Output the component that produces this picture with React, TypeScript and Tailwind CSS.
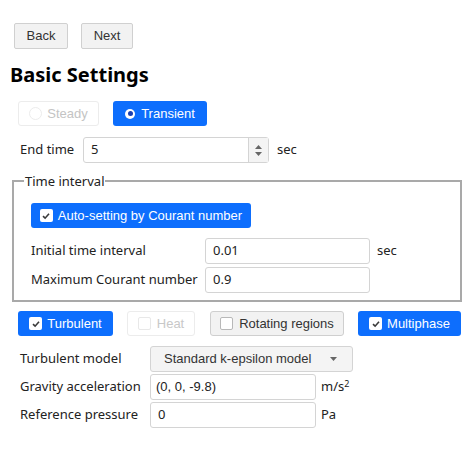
import React from "react";

const Check = ({ on, disabled }: { on: boolean; disabled?: boolean }) => (
  <span
    className={
      "inline-flex items-center justify-center w-[13px] h-[13px] rounded-[2px] " +
      (on ? "bg-white" : disabled ? "bg-white border border-[#e8e8e8]" : "bg-white border border-[#b8b8b8]")
    }
  >
    {on && (
      <svg width="10" height="10" viewBox="0 0 10 10">
        <path d="M2 5.2 L4.1 7.2 L8 2.8" fill="none" stroke="#3a3a3a" strokeWidth="1.6" />
      </svg>
    )}
  </span>
);

const labelFont = { fontFamily: '"Noto Sans", sans-serif' } as const;
const btnFont = { fontFamily: '"Liberation Sans", Arial, sans-serif' } as const;

export default function App() {
  return (
    <div className="w-[474px] h-[451px] bg-white text-[#222] relative" style={labelFont}>
      <div className="flex gap-[13px] pl-[14px] pt-[23px]" style={btnFont}>
        <button className="w-[54px] h-[26px] border border-[#d0d0d0] bg-[#f2f2f2] rounded-[2px] text-[13px] text-[#333]" style={btnFont}>Back</button>
        <button className="w-[52px] h-[26px] border border-[#d0d0d0] bg-[#f2f2f2] rounded-[2px] text-[13px] text-[#333]" style={btnFont}>Next</button>
      </div>
      <h1 className="ml-[10px] mt-[14px] text-[20px] font-bold leading-[24px] text-black">Basic Settings</h1>
      <div className="flex gap-[14px] ml-[18px] mt-[14px] text-[13px]" style={btnFont}>
        <button className="w-[81px] h-[25px] border border-[#ececec] bg-white rounded-[3px] text-[#c4c4c4] flex items-center justify-center gap-[5px]" style={btnFont}>
          <span className="w-[13px] h-[13px] rounded-full border border-[#ececec]" />
          Steady
        </button>
        <button className="w-[94px] h-[25px] bg-[#0d6efd] rounded-[3px] text-white flex items-center justify-center gap-[6px]" style={btnFont}>
          <span className="w-[10px] h-[10px] rounded-full bg-white flex items-center justify-center">
            <span className="w-[5px] h-[5px] rounded-full bg-[#1a3fb0]" />
          </span>
          Transient
        </button>
      </div>
      <div className="flex items-center ml-[20px] mt-[11px] h-[26px] text-[13px]">
        <span className="w-[63px]">End time</span>
        <div className="flex w-[186px] h-[26px] border border-[#d4d4d4] rounded-[3px]">
          <div className="flex-1 pl-[7px] flex items-center">5</div>
          <div className="w-[20px] border-l border-[#d4d4d4] bg-[#f4f4f4] flex flex-col items-center justify-center gap-[3px]">
            <svg width="7" height="4" viewBox="0 0 7 4"><path d="M0 4 L3.5 0 L7 4Z" fill="#666" /></svg>
            <svg width="7" height="4" viewBox="0 0 7 4"><path d="M0 0 L3.5 4 L7 0Z" fill="#666" /></svg>
          </div>
        </div>
        <span className="ml-[8px]">sec</span>
      </div>
      <fieldset className="ml-[12px] mt-[9px] w-[450px] border-2 border-[#a9a9a9] pl-[17px] pr-[10px] pb-[7px] pt-[13px]">
        <legend className="text-[13px] px-[1px] -ml-[7px] leading-[18px]">Time interval</legend>
        <button className="h-[25px] w-[220px] bg-[#0d6efd] rounded-[3px] text-white text-[13px] flex items-center justify-center gap-[5px]" style={btnFont}>
          <Check on />
          Auto-setting by Courant number
        </button>
        <div className="flex items-center mt-[10px] text-[13px] whitespace-nowrap">
          <span className="w-[174px]">Initial time interval</span>
          <div className="w-[165px] h-[26px] border border-[#d4d4d4] rounded-[3px] pl-[7px] flex items-center">0.01</div>
          <span className="ml-[7px]">sec</span>
        </div>
        <div className="flex items-center mt-[3px] text-[13px] whitespace-nowrap">
          <span className="w-[174px]">Maximum Courant number</span>
          <div className="w-[165px] h-[26px] border border-[#d4d4d4] rounded-[3px] pl-[7px] flex items-center">0.9</div>
        </div>
      </fieldset>
      <div className="flex ml-[18px] mt-[9px] text-[13px]" style={btnFont}>
        <button className="w-[95px] h-[25px] bg-[#0d6efd] rounded-[3px] text-white flex items-center justify-center gap-[5px]" style={btnFont}>
          <Check on />
          Turbulent
        </button>
        <button className="ml-[14px] w-[68px] h-[25px] border border-[#ececec] bg-white rounded-[3px] text-[#c8c8c8] flex items-center justify-center gap-[6px]" style={btnFont}>
          <Check on={false} disabled />
          Heat
        </button>
        <button className="ml-[15px] w-[134px] h-[25px] border border-[#cfcfcf] bg-[#f2f2f2] rounded-[3px] text-[#333] flex items-center justify-center gap-[6px]" style={btnFont}>
          <Check on={false} />
          Rotating regions
        </button>
        <button className="ml-[14px] w-[103px] h-[25px] bg-[#0d6efd] rounded-[3px] text-white flex items-center justify-center gap-[5px]" style={btnFont}>
          <Check on />
          Multiphase
        </button>
      </div>
      <div className="ml-[20px] mt-[10px] text-[13px] whitespace-nowrap">
        <div className="flex items-center h-[26px]">
          <span className="w-[130px]">Turbulent model</span>
          <div className="w-[203px] h-[26px] border border-[#d4d4d4] bg-[#f4f4f4] rounded-[3px] flex items-center pl-[13px] pr-[15px]" style={btnFont}>
            <span className="flex-1 text-[#333]">Standard k-epsilon model</span>
            <svg width="7" height="4" viewBox="0 0 7 4"><path d="M0 0 L3.5 4 L7 0Z" fill="#666" /></svg>
          </div>
        </div>
        <div className="flex items-center h-[26px] mt-[2px]">
          <span className="w-[130px]">Gravity acceleration</span>
          <div className="w-[166px] h-[26px] border border-[#d4d4d4] rounded-[3px] pl-[5px] flex items-center" style={btnFont}>(0, 0, -9.8)</div>
          <span className="ml-[5px]">m/s<sup className="text-[9px]">2</sup></span>
        </div>
        <div className="flex items-center h-[26px] mt-[2px]">
          <span className="w-[130px]">Reference pressure</span>
          <div className="w-[166px] h-[26px] border border-[#d4d4d4] rounded-[3px] pl-[7px] flex items-center">0</div>
          <span className="ml-[5px]">Pa</span>
        </div>
      </div>
    </div>
  );
}
